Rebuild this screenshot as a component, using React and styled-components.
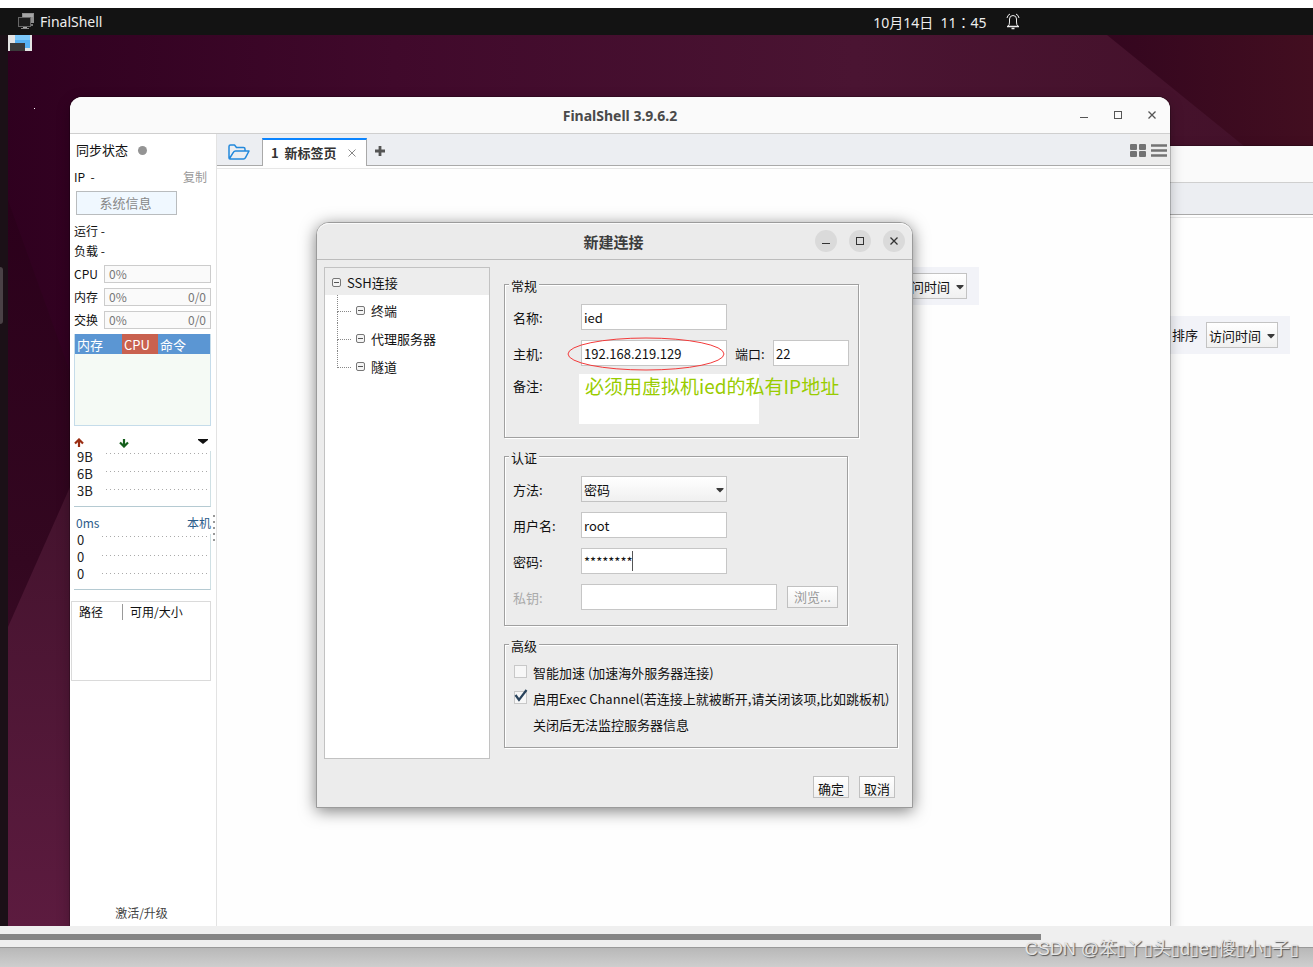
import { useState } from "react";
import styled, { createGlobalStyle } from "styled-components";

const FieldRow = ({ id, label, disabled, children }) => (
  <>
    <FieldLabel htmlFor={id} $disabled={disabled}>
      {label}
    </FieldLabel>
    <FieldControls>{children}</FieldControls>
  </>
);

const Dropdown = ({ id, options, label, $width }) => (
  <SelectWrap $width={$width}>
    <Select id={id} aria-label={label}>
      {options.map((option) => (
        <option key={option}>{option}</option>
      ))}
    </Select>
    <Caret viewBox="0 0 8 5">
      <path d="M.5 0h7v1L4 4.500L.5 1z" fill="#3a3a3a" />
    </Caret>
  </SelectWrap>
);

const WindowControls = ({ round }) => (
  <Controls>
    <WindowButton type="button" aria-label="最小化" $round={round}>
      <svg width="10" height="10">
        <path d="M1 7.500h8" />
      </svg>
    </WindowButton>
    <WindowButton type="button" aria-label="最大化" $round={round}>
      <svg width="10" height="10">
        <rect x="1.500" y="1.500" width="7" height="7" />
      </svg>
    </WindowButton>
    <WindowButton type="button" aria-label="关闭" $round={round}>
      <svg width="10" height="10">
        <path d="M1.500 1.500l7 7M8.500 1.500l-7 7" strokeWidth="1.300" />
      </svg>
    </WindowButton>
  </Controls>
);

const Plot = ({ labels, lines, inset }) => (
  <PlotBox>
    <PlotLabels>
      {labels.map((label, i) => (
        <li key={i}>{label}</li>
      ))}
    </PlotLabels>
    <PlotArea>
      {lines.map((y) => (
        <line
          key={y}
          x1={inset}
          x2="134"
          y1={y}
          y2={y}
          stroke="#aaa"
          strokeDasharray="1 3"
        />
      ))}
    </PlotArea>
  </PlotBox>
);

const Sidebar = () => (
  <Side>
    <SyncRow>
      同步状态
      <SyncDot />
    </SyncRow>
    <IpRow>
      <span>IP&nbsp; -</span>
      <CopyButton type="button">复制</CopyButton>
    </IpRow>
    <InfoButton type="button">系统信息</InfoButton>
    <StatRow>运行 -</StatRow>
    <StatRow>负载 -</StatRow>
    <Meters>
      <Meter>
        <span>CPU</span>
        <MeterBar>0%</MeterBar>
      </Meter>
      <Meter>
        <span>内存</span>
        <MeterBar>
          0%<span>0/0</span>
        </MeterBar>
      </Meter>
      <Meter>
        <span>交换</span>
        <MeterBar>
          0%<span>0/0</span>
        </MeterBar>
      </Meter>
    </Meters>
    <ProcessTable>
      <thead>
        <tr>
          <ProcessHead $width="47px">内存</ProcessHead>
          <ProcessHead $width="36px" $active>
            CPU
          </ProcessHead>
          <ProcessHead>命令</ProcessHead>
        </tr>
      </thead>
      <tbody>
        <tr>
          <td colSpan="3" />
        </tr>
      </tbody>
    </ProcessTable>
    <TrafficRow>
      <svg width="10" height="10" viewBox="0 0 10 10">
        <path d="M5 9V2M1 5.500L5 1.500L9 5.500" stroke="#9a2d12" strokeWidth="2.200" fill="none" />
      </svg>
      <svg width="10" height="10" viewBox="0 0 10 10">
        <path d="M5 1V8M1 4.500L5 8.500L9 4.500" stroke="#155f1c" strokeWidth="2.200" fill="none" />
      </svg>
      <svg width="10" height="10" viewBox="0 0 10 10">
        <path d="M0 1h10v1L5 6L0 2z" fill="#111" />
      </svg>
    </TrafficRow>
    <Plot labels={["9B", "6B", "3B"]} lines={[2.5, 20.5, 38.5]} inset={32} />
    <PingRow>
      <span>0ms</span>
      <span>本机</span>
    </PingRow>
    <Plot labels={["0", "0", "0"]} lines={[2.5, 21.5, 39.5]} inset={28} />
    <DiskPanel>
      <span>路径</span>
      <span>可用/大小</span>
    </DiskPanel>
    <Upgrade href="#upgrade">激活/升级</Upgrade>
    <SplitHandle>
      <i />
      <i />
      <i />
      <i />
      <i />
    </SplitHandle>
  </Side>
);

const Tabs = () => (
  <>
    <FolderButton type="button" aria-label="打开">
      <svg width="22" height="16" viewBox="0 0 22 16">
        <path
          d="M1 14V2.500Q1 1 2.500 1H6.500L8.500 3.500H15.500Q17 3.500 17 5V7M1.500 14.500L5.500 8.200Q6.200 7 7.500 7H21L17.500 13.700Q16.800 15 15.500 15H2Q1 15 1 14"
          fill="none"
          stroke="#2389dc"
          strokeWidth="1.500"
          strokeLinejoin="round"
        />
      </svg>
    </FolderButton>
    <Tab>
      <span>1&nbsp; 新标签页</span>
      <TabClose type="button" aria-label="关闭标签">
        <svg width="8" height="8">
          <path d="M.5 .5l7 7M7.500 .5l-7 7" stroke="#888" fill="none" />
        </svg>
      </TabClose>
    </Tab>
    <AddTab type="button" aria-label="新建标签">
      <svg width="10" height="10">
        <path d="M5 0v10M0 5h10" stroke="#555" strokeWidth="2.800" />
      </svg>
    </AddTab>
    <ViewButtons>
      <ViewButton type="button" aria-label="网格">
        <svg width="16" height="13" fill="#737373">
          <rect width="7" height="6" rx="1" />
          <rect x="9" width="7" height="6" rx="1" />
          <rect y="7" width="7" height="6" rx="1" />
          <rect x="9" y="7" width="7" height="6" rx="1" />
        </svg>
      </ViewButton>
      <ViewButton type="button" aria-label="菜单">
        <svg width="16" height="13">
          <path d="M0 1.500h16M0 6.500h16M0 11.500h16" stroke="#737373" strokeWidth="2.400" />
        </svg>
      </ViewButton>
    </ViewButtons>
  </>
);

const SortContent = () => (
  <Content>
    <SortBar>
      <span>排序</span>
      <Dropdown label="排序" options={["访问时间"]} $width="72px" />
    </SortBar>
  </Content>
);

const ShellWindow = () => (
  <Window>
    <TitleBar>
      FinalShell 3.9.6.2
      <WindowControls />
    </TitleBar>
    <WindowBody>
      <Sidebar />
      <Main>
        <TabBar>
          <Tabs />
        </TabBar>
        <SortContent />
      </Main>
    </WindowBody>
  </Window>
);

// only its right edge shows, the rest lies under the front window
const BackWindow = () => (
  <Window $back>
    <TitleBar />
    <WindowBody>
      <Main>
        <TabBar />
        <SortContent />
      </Main>
    </WindowBody>
  </Window>
);

const TreeToggle = () => (
  <ToggleIcon width="9" height="9">
    <rect x=".5" y=".5" width="8" height="8" rx="1.500" fill="#f4f4f4" stroke="#777" />
    <path d="M2 4.500h5" stroke="#555" />
  </ToggleIcon>
);

const ConnectionDialog = () => {
  const [boost, setBoost] = useState(false);
  const [exec, setExec] = useState(true);

  return (
    <Dialog role="dialog" aria-label="新建连接">
      <DialogTitle>
        新建连接
        <WindowControls round />
      </DialogTitle>
      <DialogBody>
        <Tree>
          <TreeRoot>
            <TreeToggle />
            SSH连接
          </TreeRoot>
          <TreeChildren>
            {["终端", "代理服务器", "隧道"].map((item) => (
              <TreeItem key={item}>
                <TreeToggle />
                {item}
              </TreeItem>
            ))}
          </TreeChildren>
        </Tree>
        <Form>
          <Group>
            <legend>常规</legend>
            <Fields $bottom="13px">
              <FieldRow id="name" label="名称:">
                <Input id="name" defaultValue="ied" />
              </FieldRow>
              <FieldRow id="host" label="主机:">
                <Input id="host" defaultValue="192.168.219.129" />
                <Circle viewBox="0 0 158 34">
                  <ellipse cx="79" cy="17" rx="78" ry="16" fill="none" stroke="#f33a3a" />
                </Circle>
                <PortLabel htmlFor="port">端口:</PortLabel>
                <Input id="port" defaultValue="22" $width="76px" />
              </FieldRow>
              <RemarkLabel htmlFor="remark">备注:</RemarkLabel>
              <RemarkWrap>
                <Remark id="remark" />
                <Note>必须用虚拟机ied的私有IP地址</Note>
              </RemarkWrap>
            </Fields>
          </Group>
          <Group>
            <legend>认证</legend>
            <Fields $bottom="15px">
              <FieldRow id="method" label="方法:">
                <Dropdown id="method" options={["密码"]} $width="146px" />
              </FieldRow>
              <FieldRow id="user" label="用户名:">
                <Input id="user" defaultValue="root" />
              </FieldRow>
              <FieldRow id="password" label="密码:">
                <Input id="password" defaultValue="********" />
                <TextCursor />
              </FieldRow>
              <FieldRow id="key" label="私钥:" disabled>
                <Input id="key" $width="196px" />
                <Browse type="button" disabled>
                  浏览...
                </Browse>
              </FieldRow>
            </Fields>
          </Group>
          <Group>
            <legend>高级</legend>
            <Options>
              <Option>
                <input
                  type="checkbox"
                  checked={boost}
                  onChange={() => setBoost(!boost)}
                />
                <CheckBox />
                智能加速 (加速海外服务器连接)
              </Option>
              <Option>
                <input
                  type="checkbox"
                  checked={exec}
                  onChange={() => setExec(!exec)}
                />
                <CheckBox>
                  {exec && (
                    <svg width="14" height="14" viewBox="0 0 14 14">
                      <path d="M1.500 6L5 11L12.500 1" fill="none" stroke="#29435c" strokeWidth="2.200" />
                    </svg>
                  )}
                </CheckBox>
                启用Exec Channel(若连接上就被断开,请关闭该项,比如跳板机)
              </Option>
              <Hint>关闭后无法监控服务器信息</Hint>
            </Options>
          </Group>
        </Form>
      </DialogBody>
      <DialogActions>
        <ActionButton type="button">确定</ActionButton>
        <ActionButton type="button">取消</ActionButton>
      </DialogActions>
    </Dialog>
  );
};

const DesktopWallpaper = () => (
  <Wallpaper>
    <defs>
      <linearGradient id="base" x1="0" y1="0" x2="1" y2="0">
        <stop offset="0" stopColor="#2f001f" />
        <stop offset="0.300" stopColor="#40092b" />
        <stop offset="0.650" stopColor="#4a1432" />
        <stop offset="1" stopColor="#431129" />
      </linearGradient>
      <linearGradient id="fold" x1="0" y1="0" x2="1" y2="0">
        <stop offset="0" stopColor="#34061f" />
        <stop offset="1" stopColor="#420e20" />
      </linearGradient>
      <linearGradient id="left" x1="0" y1="0" x2="0" y2="1">
        <stop offset="0" stopColor="#2b001b" />
        <stop offset="0.500" stopColor="#330720" />
        <stop offset="1" stopColor="#451130" />
      </linearGradient>
      <linearGradient id="glow" x1="0" y1="0" x2="0" y2="1">
        <stop offset="0" stopColor="#42122c" />
        <stop offset="1" stopColor="#5c1b3f" />
      </linearGradient>
    </defs>
    <rect width="100%" height="100%" fill="url(#base)" />
    <polygon points="1107,0 1313,0 1313,165 1255,120" fill="url(#fold)" />
    <polygon points="8,165 82,370 82,891 8,891" fill="url(#left)" />
    <polygon points="82,425 8,592 8,891 82,891" fill="url(#glow)" />
    <rect x="34" y="73" width="1" height="1" fill="#fff" />
  </Wallpaper>
);

const App = () => (
  <>
    <GlobalStyle />
    <Page>
      <MenuBar>
        <AppName>
          <svg width="18" height="17" viewBox="0 0 18 17">
            <rect x="4" y="0" width="12" height="10" fill="#8d8d8d" />
            <rect x="5" y="1" width="10" height="3" fill="#a5a5a5" />
            <rect x="11" y="11" width="4" height="2" fill="#777" />
            <rect x="0.500" y="4.500" width="12" height="9" fill="#1c1c1c" stroke="#666" />
            <rect x="5" y="14" width="4" height="1" fill="#aaa" />
            <rect x="3" y="15" width="8" height="1" fill="#888" />
          </svg>
          FinalShell
        </AppName>
        <Clock>
          <span>10月14日&nbsp; 11：45</span>
          <svg width="14" height="17" viewBox="0 0 14 17" fill="none" stroke="#eee">
            <path d="M2 13.500Q3.500 12 3.500 9V6Q3.500 2.500 7 2.500Q10.500 2.500 10.500 6V9Q10.500 12 12 13.500" />
            <path d="M1 13.500H13" strokeWidth="1.500" />
            <path d="M5.500 15.500H8.500" strokeWidth="1.500" />
            <path d="M1 5Q1.500 2 4 1M13 5Q12.500 2 10 1" />
          </svg>
        </Clock>
      </MenuBar>
      <Desktop>
        <DesktopWallpaper />
        <Dock />
        <DesktopIcon width="24" height="16">
          <rect width="24" height="16" fill="#e4e4e4" />
          <rect x="7" y="0" width="15" height="13" fill="#57b2f4" />
          <rect x="7" y="0" width="15" height="5" fill="#7cc8fa" />
          <rect x="2" y="8" width="15" height="8" fill="#3a3a3a" />
        </DesktopIcon>
        <BackWindow />
        <ShellWindow />
        <ConnectionDialog />
      </Desktop>
      <ScrollStrip>
        <ScrollThumb />
      </ScrollStrip>
      <Floor>
        <Watermark>
          CSDN @笨<b>▯</b>丫<b>▯</b>头<b>▯</b>d<b>▯</b>e<b>▯</b>傻<b>▯</b>小<b>▯</b>子<b>▯</b>
        </Watermark>
      </Floor>
    </Page>
  </>
);

export default App;

/**
 *
 * STYLED COMPONENTS
 *
 **/
const GlobalStyle = createGlobalStyle`
  * {
    box-sizing: border-box;
  }

  body {
    margin: 0;
    background: #fff;
    color: #111;
    font: 13px/20px "Noto Sans CJK SC", sans-serif;
  }

  button, input, select, textarea {
    margin: 0;
    padding: 0;
    font: inherit;
    color: inherit;
  }

  svg {
    display: block;
    flex: none;
  }
`;

const Page = styled.div`
  display: flex;
  flex-direction: column;
  height: 100vh;
  padding-top: 8px;
  overflow: hidden;
`;

const MenuBar = styled.header`
  display: grid;
  grid-template-columns: 66.5% auto;
  align-items: center;
  height: 27px;
  background: #131313;
  color: #eee;
  font: 14px/20px "Noto Sans", "Noto Sans CJK TC", sans-serif;
`;

const AppName = styled.div`
  display: flex;
  align-items: center;
  gap: 4px;
  padding-left: 18px;
`;

const Clock = styled.div`
  display: flex;
  align-items: center;
  gap: 20px;

  span {
    padding-top: 2px;
  }
`;

const Desktop = styled.main`
  position: relative;
  flex: 1;
  overflow: hidden;
`;

const Wallpaper = styled.svg`
  position: absolute;
  width: 100%;
  height: 100%;
`;

const Dock = styled.div`
  position: absolute;
  top: 0;
  bottom: 0;
  width: 8px;
  background: #1b1017;

  &:before {
    content: "";
    position: absolute;
    top: 232px;
    width: 3px;
    height: 57px;
    border-radius: 0 3px 3px 0;
    background: #4a4146;
  }
`;

const DesktopIcon = styled.svg`
  position: absolute;
  left: 8px;
`;

const Window = styled.section`
  position: absolute;
  top: ${({ $back }) => ($back ? "111px" : "62px")};
  bottom: -2px;
  left: ${({ $back }) => ($back ? "381px" : "70px")};
  right: ${({ $back }) => ($back ? "-168px" : "143px")};
  display: flex;
  flex-direction: column;
  border-radius: 12px 12px 0 0;
  overflow: hidden;
  background: #fefefe;
  box-shadow: 0 0 0 1px rgba(0, 0, 0, 0.2), 0 4px 14px rgba(0, 0, 0, 0.25);
`;

const TitleBar = styled.div`
  position: relative;
  display: flex;
  align-items: center;
  justify-content: center;
  height: 37px;
  padding-top: 1px;
  border-bottom: 1px solid #cfcfcf;
  background: #fafafa;
  color: #4a4a4a;
  font: bold 14px/20px "Noto Sans", sans-serif;
`;

const Controls = styled.div`
  position: absolute;
  top: 7px;
  right: 7px;
  display: flex;
  gap: 12px;
`;

const WindowButton = styled.button`
  display: grid;
  place-items: center;
  width: 22px;
  height: 22px;
  border: 0;
  border-radius: 50%;
  background: ${({ $round }) => ($round ? "#dadada" : "none")};

  svg {
    fill: none;
    stroke: ${({ $round }) => ($round ? "#333" : "#555")};
  }
`;

const WindowBody = styled.div`
  display: flex;
  flex: 1;
`;

const Side = styled.aside`
  position: relative;
  display: flex;
  flex-direction: column;
  width: 147px;
  padding: 6px 5px 2px 4px;
  border-right: 1px solid #e3e3e3;
  background: #fff;
  font-size: 12px;
`;

const SyncRow = styled.div`
  display: flex;
  align-items: center;
  gap: 10px;
  padding-left: 2px;
  font-size: 13px;
`;

const SyncDot = styled.span`
  width: 9px;
  height: 9px;
  border-radius: 50%;
  background: #949494;
`;

const IpRow = styled.div`
  display: flex;
  justify-content: space-between;
  margin-top: 7px;
  padding-right: 4px;
`;

const CopyButton = styled.button`
  border: 0;
  background: none;
  color: #999;
`;

const InfoButton = styled.button`
  width: 101px;
  height: 24px;
  margin: 4px 2px 6px;
  padding-right: 2px;
  border: 1px solid #b9bcbe;
  background: #f0f8ff;
  color: #888;
  font-size: 13px;
`;

const StatRow = styled.div`
  height: 20px;
`;

const Meters = styled.div`
  display: grid;
  gap: 5px;
  margin-top: 3px;
`;

const Meter = styled.div`
  display: grid;
  grid-template-columns: 30px 1fr;
  align-items: center;
  height: 18px;
`;

const MeterBar = styled.div`
  display: flex;
  justify-content: space-between;
  height: 18px;
  padding: 0 4px;
  border: 1px solid #ccc;
  background: #fafafa;
  color: #777;
  line-height: 15px;
`;

const ProcessTable = styled.table`
  height: 92px;
  margin-top: 6px;
  border: 1px solid #c5dcea;
  border-top: 0;
  border-spacing: 0;
  table-layout: fixed;
  background: #f5faf5;

  td {
    padding: 0;
  }
`;

const ProcessHead = styled.th`
  width: ${({ $width }) => $width || "auto"};
  height: 20px;
  padding: 1px 2px 0;
  background: ${({ $active }) => ($active ? "#c9614f" : "#5b96d3")};
  color: #fff;
  font-size: 13px;
  font-weight: normal;
  line-height: 19px;
  text-align: left;
`;

const TrafficRow = styled.div`
  display: grid;
  grid-template-columns: 45px 1fr 13px;
  align-items: center;
  height: 25px;
  padding-top: 8px;
`;

const PlotBox = styled.div`
  display: grid;
  height: 56px;
  border-right: 1px solid #cfe0e4;
  border-bottom: 1px solid #b5cad2;

  > * {
    grid-area: 1 / 1;
  }
`;

const PlotLabels = styled.ul`
  margin: -3px 0 0;
  padding: 0 3px;
  list-style: none;
  color: #222;
  font-size: 13px;
  line-height: 17px;
`;

const PlotArea = styled.svg`
  width: 100%;
  height: 54px;
`;

const PingRow = styled.div`
  display: flex;
  justify-content: space-between;
  height: 27px;
  padding: 6px 0 0 2px;
  color: #2c5c8a;
`;

const DiskPanel = styled.div`
  display: flex;
  height: 80px;
  margin: 11px 0 0 -3px;
  padding: 0 7px;
  border: 1px solid #dadada;

  span + span {
    height: 16px;
    margin: 2px 0 0 19px;
    padding-left: 7px;
    border-left: 1px solid #999;
    line-height: 16px;
  }
`;

const Upgrade = styled.a`
  margin-top: auto;
  padding: 0 2px 3px 0;
  color: #444;
  text-align: center;
  text-decoration: none;
`;

const SplitHandle = styled.div`
  position: absolute;
  top: 381px;
  right: 1px;
  display: grid;
  gap: 4px;

  i {
    width: 2px;
    height: 2px;
    background: #999;
  }
`;

const Main = styled.div`
  display: flex;
  flex: 1;
  flex-direction: column;
`;

const TabBar = styled.nav`
  display: flex;
  height: 32px;
  border-bottom: 1px solid #a9a9a9;
  background: #eceef2;
`;

const FolderButton = styled.button`
  display: grid;
  place-items: center;
  width: 45px;
  padding: 5px 2px 0 0;
  border: 0;
  background: none;
`;

const Tab = styled.div`
  display: flex;
  align-items: center;
  gap: 11px;
  height: 28px;
  margin-top: 4px;
  padding: 0 10px 0 8px;
  border: 1px solid #a9a9a9;
  border-top: 2px solid #0a84ff;
  border-bottom: 0;
  background: #fff;
  color: #333;
  font-weight: bold;
`;

const TabClose = styled.button`
  display: flex;
  border: 0;
  background: none;
`;

const AddTab = styled.button`
  display: grid;
  place-items: center;
  width: 26px;
  padding-top: 3px;
  border: 0;
  background: none;
`;

const ViewButtons = styled.div`
  display: flex;
  align-items: center;
  gap: 5px;
  margin-left: auto;
  padding: 2px 3px 0 0;
  background: #ededed;
`;

const ViewButton = styled.button`
  border: 0;
  background: none;
`;

const Content = styled.div`
  flex: 1;
  margin-top: 2px;
  padding: 98px 191px 0;
  border-top: 1px solid #e6e6e6;
`;

const SortBar = styled.div`
  display: flex;
  align-items: center;
  justify-content: flex-end;
  gap: 8px;
  height: 38px;
  padding-right: 12px;
  background: #f2f3f8;
`;

const SelectWrap = styled.div`
  position: relative;
  width: ${({ $width }) => $width};
`;

const Select = styled.select`
  display: block;
  width: 100%;
  height: 26px;
  padding: 2px 2px 0;
  border: 1px solid #c3c3c3;
  border-radius: 0;
  background: linear-gradient(#fff, #f0f0f0);
  appearance: none;
`;

const Caret = styled.svg`
  position: absolute;
  top: 12px;
  right: 3px;
  width: 8px;
  height: 5px;
  pointer-events: none;
`;

const Dialog = styled.section`
  position: absolute;
  top: 187px;
  left: 316px;
  width: 597px;
  border: 1px solid #9b9b9b;
  border-radius: 13px 13px 0 0;
  background: #ececec;
  box-shadow: 0 3px 16px rgba(0, 0, 0, 0.5);
`;

const DialogTitle = styled.div`
  position: relative;
  display: flex;
  align-items: center;
  justify-content: center;
  height: 37px;
  padding: 2px 2px 0 0;
  border-bottom: 1px solid #bcbcbc;
  border-radius: 12px 12px 0 0;
  background: #ebebeb;
  box-shadow: inset 0 1px #fafafa;
  color: #3d3d3d;
  font-size: 15px;
  font-weight: bold;
`;

const DialogBody = styled.div`
  display: flex;
  gap: 14px;
  padding: 7px 7px 0;
`;

const Tree = styled.div`
  width: 166px;
  height: 492px;
  border: 1px solid #c2c2c2;
  background: #fff;
`;

const ToggleIcon = styled.svg`
  margin-bottom: 2px;
`;

const TreeRoot = styled.div`
  display: flex;
  align-items: center;
  gap: 6px;
  height: 27px;
  padding: 3px 7px 0;
  background: #ededed;
`;

const TreeChildren = styled.ul`
  margin: 0 0 0 12px;
  padding: 0;
  list-style: none;
`;

const TreeItem = styled.li`
  position: relative;
  display: flex;
  align-items: center;
  gap: 6px;
  height: 28px;
  padding: 4px 0 0 19px;

  &:before {
    content: "";
    position: absolute;
    top: 0;
    left: 0;
    width: 13px;
    height: 16px;
    border: 1px dotted #888;
    border-width: 0 0 1px 1px;
  }

  &:not(:last-child):after {
    content: "";
    position: absolute;
    top: 16px;
    bottom: 0;
    left: 0;
    border-left: 1px dotted #888;
  }
`;

const Form = styled.form`
  display: flex;
  flex-direction: column;
  align-items: flex-start;
  gap: 10px;
  padding-top: 9px;
`;

const Group = styled.fieldset`
  margin: 0;
  padding: 0;
  border: 1px solid #a0a0a0;
  box-shadow: 1px 1px #fff, inset 1px 1px #fff;

  legend {
    height: 17px;
    margin-left: 4px;
    padding: 0 2px;
    background: #ececec;
  }
`;

const Fields = styled.div`
  display: grid;
  grid-template-columns: 68px auto;
  row-gap: 10px;
  padding: 11px 9px ${({ $bottom }) => $bottom} 8px;
`;

const FieldLabel = styled.label`
  padding-top: 4px;
  color: ${({ $disabled }) => ($disabled ? "#aaa" : "#111")};
`;

const RemarkLabel = styled(FieldLabel)`
  padding-top: 0;
`;

const FieldControls = styled.div`
  position: relative;
  display: flex;
  align-items: center;
  height: 26px;
`;

const Input = styled.input`
  width: ${({ $width }) => $width || "146px"};
  height: 26px;
  padding: 0 2px;
  border: 1px solid #c6c6c6;
  background: #fff;
  outline: 0;
`;

const PortLabel = styled.label`
  width: 46px;
  padding: 2px 0 0 8px;
`;

const Circle = styled.svg`
  position: absolute;
  top: -3px;
  left: -14px;
  width: 158px;
  height: 34px;
  pointer-events: none;
`;

const RemarkWrap = styled.div`
  position: relative;
  margin: -2px 0 0 -2px;
`;

const Remark = styled.textarea`
  display: block;
  width: 180px;
  height: 50px;
  border: 0;
  background: #fff;
  resize: none;
`;

const Note = styled.span`
  position: absolute;
  top: 2px;
  left: 6px;
  color: #9c0;
  font-size: 19px;
  white-space: nowrap;
`;

const TextCursor = styled.span`
  position: absolute;
  top: 3px;
  left: 51px;
  width: 1px;
  height: 20px;
  background: #555;
`;

const Button = styled.button`
  height: 22px;
  border: 1px solid #c0c0c0;
  background: linear-gradient(#fff, #f0f0f0);
`;

const Browse = styled(Button)`
  width: 51px;
  margin-left: 10px;
  color: #999;
`;

const Options = styled.div`
  padding: 7px 8px 9px;
`;

const Option = styled.label`
  display: flex;
  align-items: center;
  gap: 6px;
  height: 26px;
  padding-left: 1px;
  white-space: nowrap;

  input {
    position: absolute;
    opacity: 0;
  }
`;

const CheckBox = styled.span`
  width: 13px;
  height: 13px;
  margin-bottom: 3px;
  border: 1px solid #c8c8c8;
  background: #f7f7f7;

  svg {
    margin: -3px -1px;
  }
`;

const Hint = styled.div`
  padding-left: 20px;
  line-height: 26px;
`;

const DialogActions = styled.div`
  display: flex;
  justify-content: flex-end;
  gap: 10px;
  padding: 17px 17px 9px;
`;

const ActionButton = styled(Button)`
  width: 36px;
  padding-top: 2px;
`;

const ScrollStrip = styled.div`
  height: 22px;
  padding-top: 8px;
  border-bottom: 1px solid #999;
  background: #efefef;
`;

const ScrollThumb = styled.div`
  width: 79.3%;
  height: 6px;
  background: #858585;
`;

const Floor = styled.footer`
  position: relative;
  height: 19px;
  background: linear-gradient(#b8b8b8, #cecece);
`;

const Watermark = styled.div`
  position: absolute;
  right: 14px;
  bottom: 5px;
  color: #e4e4e4;
  font: 18px/24px "Liberation Sans", "Noto Sans CJK SC", sans-serif;
  text-shadow: 1px 1px 1px #555;
  white-space: nowrap;

  b {
    font-size: 16px;
    font-weight: normal;
  }
`;
